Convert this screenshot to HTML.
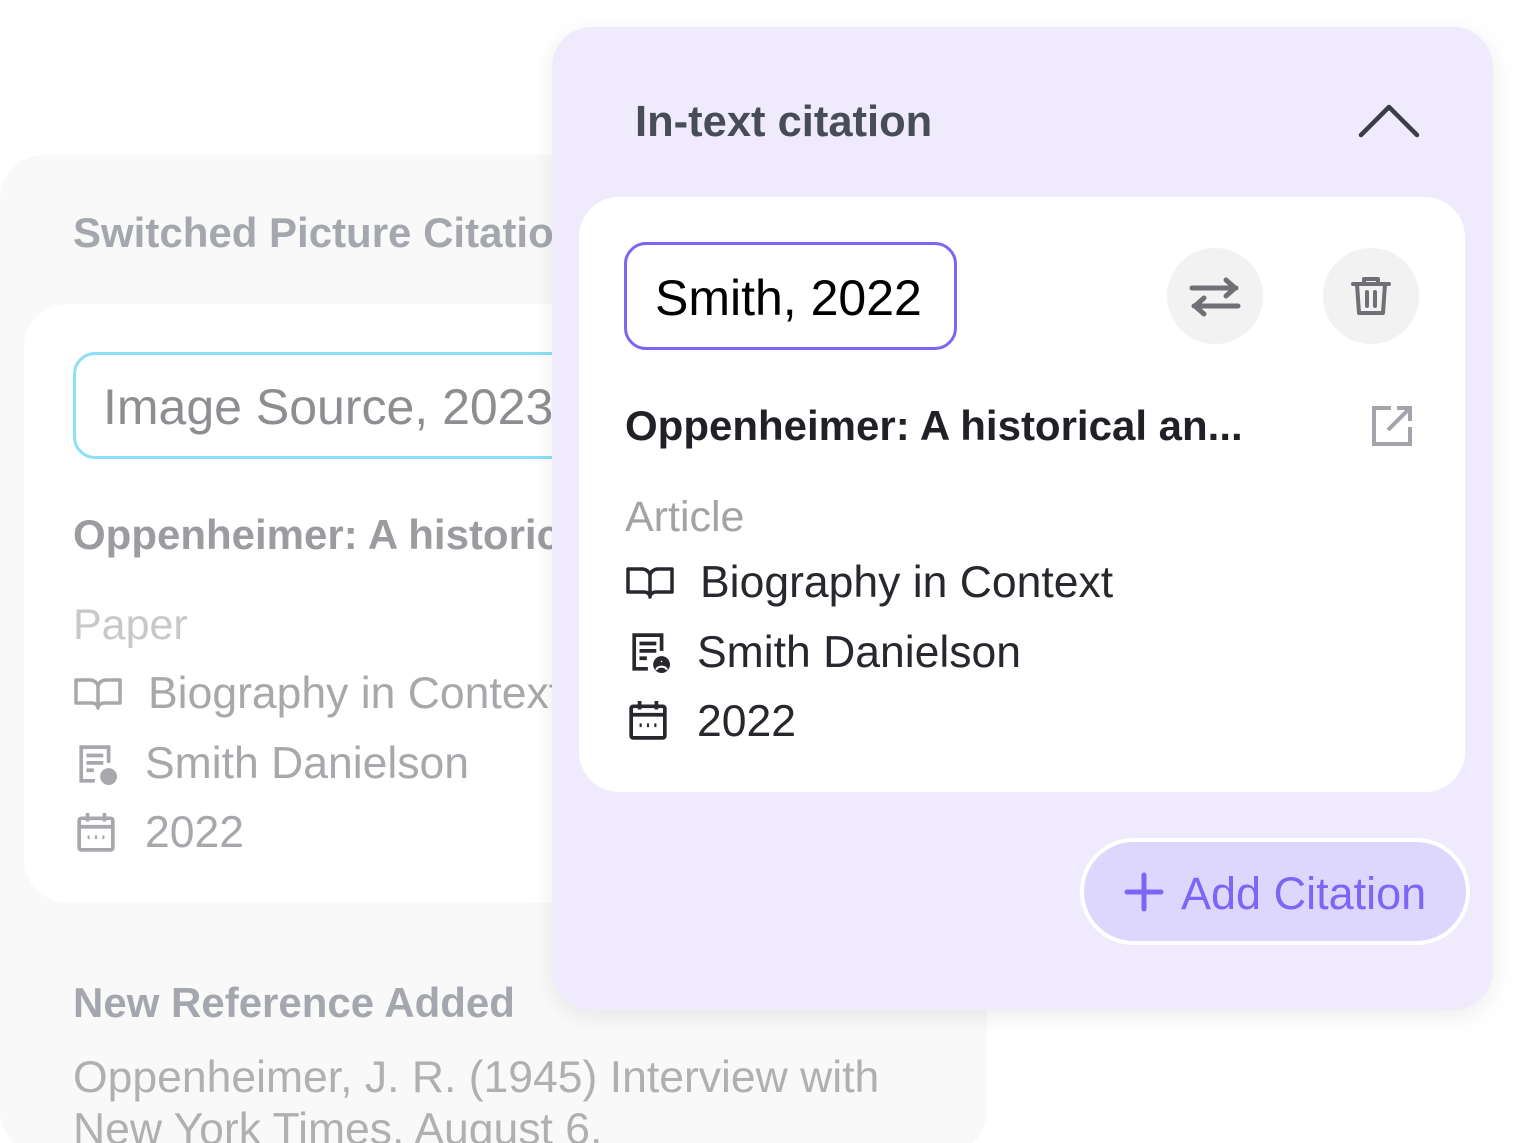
<!DOCTYPE html>
<html><head><meta charset="utf-8"><style>
*{margin:0;padding:0;box-sizing:border-box}
html,body{width:1527px;height:1143px;overflow:hidden}
body{background:#fff;font-family:"Liberation Sans",sans-serif;position:relative}
.a{position:absolute;line-height:1;white-space:nowrap}
#back{position:absolute;left:0;top:155px;width:987px;height:1000px;background:#f9f9f9;border-radius:44px;overflow:hidden}
#bin{position:absolute;left:24px;top:149px;width:1000px;height:599px;background:#fff;border-radius:44px}
#front{position:absolute;left:552px;top:27px;width:941px;height:983px;background:#efebfd;border-radius:40px;box-shadow:0 6px 24px rgba(0,0,0,.08)}
#fin{position:absolute;left:27px;top:170px;width:886px;height:595px;background:#fff;border-radius:40px}
.circ{position:absolute;width:96px;height:96px;border-radius:50%;background:#f2f2f2}
</style></head><body>
<div id="back">
  <div class="a" style="left:73px;top:57px;font-size:42px;font-weight:bold;color:#a4a7ad">Switched Picture Citation</div>
  <div id="bin">
    <div style="position:absolute;left:49px;top:48px;width:900px;height:107px;border:3px solid #8be0f8;border-radius:22px"></div>
    <div class="a" style="left:79px;top:78px;font-size:50px;color:#8e8e92">Image Source, 2023</div>
    <div class="a" style="left:49px;top:210px;font-size:42px;font-weight:bold;color:#9a9ca0">Oppenheimer: A historical an...</div>
    <div class="a" style="left:49px;top:300px;font-size:43px;color:#c8c8c8">Paper</div>
    <svg style="position:absolute;left:50px;top:372px" width="48" height="34" viewBox="0 0 48 34" fill="none" stroke="#a8a8ac" stroke-width="3.5" stroke-linejoin="round"><path d="M2 4h14c4 0 8 3 8 7v21c0-3-3-5-6-5H2z M46 4H32c-4 0-8 3-8 7v21c0-3 3-5 6-5h16z"/></svg>
    <div class="a" style="left:124px;top:368px;font-size:44.5px;color:#a8a8ac">Biography in Context</div>
    <svg style="position:absolute;left:52px;top:441px" width="42" height="40" viewBox="0 0 38 38" fill="none" stroke="#a8a8ac" stroke-width="3.5"><path d="M17 34H4V2h26v15M9 10h16M9 17h16M9 24h7"/><circle cx="30" cy="30" r="8" fill="#a8a8ac" stroke="none"/></svg>
    <div class="a" style="left:121px;top:438px;font-size:44.5px;color:#a8a8ac">Smith Danielson</div>
    <svg style="position:absolute;left:53px;top:508px" width="38" height="40" viewBox="0 0 36 38" fill="none" stroke="#a8a8ac" stroke-width="3.5"><rect x="2" y="6" width="32" height="30" rx="2"/><path d="M2 14h32M10 1v8M26 1v8"/><path d="M10 24h2M17 24h2M24 24h2"/></svg>
    <div class="a" style="left:121px;top:507px;font-size:44.5px;color:#a8a8ac">2022</div>
  </div>
  <div class="a" style="left:73px;top:827px;font-size:42px;font-weight:bold;color:#a4a7ad">New Reference Added</div>
  <div class="a" style="left:73px;top:901px;font-size:44.5px;color:#b0b0b2">Oppenheimer, J. R. (1945) Interview with</div>
  <div class="a" style="left:73px;top:953px;font-size:44.5px;color:#b0b0b2">New York Times, August 6.</div>
</div>
<div id="front">
  <div class="a" style="left:83px;top:74px;font-size:43.5px;font-weight:bold;color:#474c56">In-text citation</div>
  <svg style="position:absolute;left:806px;top:76px" width="62" height="36" viewBox="0 0 62 36" fill="none" stroke="#3a3d45" stroke-width="4.5" stroke-linecap="round" stroke-linejoin="round"><path d="M3 32L31 4l28 28"/></svg>
  <div id="fin">
    <div style="position:absolute;left:45px;top:45px;width:333px;height:108px;border:3px solid #7b66f5;border-radius:22px"></div>
    <div class="a" style="left:76px;top:76px;font-size:50px;color:#000">Smith, 2022</div>
    <div class="circ" style="left:588px;top:51px"></div>
    <svg style="position:absolute;left:609px;top:80px" width="54" height="40" viewBox="0 0 54 40" fill="none" stroke="#6e7075" stroke-width="5" stroke-linecap="round" stroke-linejoin="round"><path d="M4 11h44M38 3l9 8-9 8M50 29H6M16 21l-9 8 9 8"/></svg>
    <div class="circ" style="left:744px;top:51px"></div>
    <svg style="position:absolute;left:771px;top:77px" width="42" height="44" viewBox="0 0 42 44" fill="none" stroke="#6e7075" stroke-width="4" stroke-linecap="round" stroke-linejoin="round"><path d="M3 10h36M14 10V5h14v5M7 10l2 29h24l2-29M17 18v14M25 18v14"/></svg>
    <div class="a" style="left:46px;top:208px;font-size:42px;font-weight:bold;color:#1f2126">Oppenheimer: A historical an...</div>
    <svg style="position:absolute;left:792px;top:208px" width="42" height="42" viewBox="0 0 42 42" fill="none" stroke="#a3a5aa" stroke-width="4"><path d="M20 3H3v36h36V22M17 25L38 4M26 3h13v13"/></svg>
    <div class="a" style="left:46px;top:299px;font-size:43px;color:#a3a3a3">Article</div>
    <svg style="position:absolute;left:47px;top:368px" width="48" height="34" viewBox="0 0 48 34" fill="none" stroke="#26282d" stroke-width="3.5" stroke-linejoin="round"><path d="M2 4h14c4 0 8 3 8 7v21c0-3-3-5-6-5H2z M46 4H32c-4 0-8 3-8 7v21c0-3 3-5 6-5h16z"/></svg>
    <div class="a" style="left:121px;top:364px;font-size:44.5px;color:#26282d">Biography in Context</div>
    <svg style="position:absolute;left:50px;top:436px" width="42" height="40" viewBox="0 0 38 38" fill="none" stroke="#26282d" stroke-width="3.5"><path d="M17 34H4V2h26v15M9 10h16M9 17h16M9 24h7"/><circle cx="30" cy="30" r="8" fill="#26282d" stroke="none"/><circle cx="30" cy="27" r="2.5" fill="#fff"/><path d="M25 35c1-4 9-4 10 0" stroke="#fff" stroke-width="2"/></svg>
    <div class="a" style="left:118px;top:434px;font-size:44.5px;color:#26282d">Smith Danielson</div>
    <svg style="position:absolute;left:50px;top:503px" width="38" height="40" viewBox="0 0 36 38" fill="none" stroke="#26282d" stroke-width="3.5"><rect x="2" y="6" width="32" height="30" rx="2"/><path d="M2 14h32M10 1v8M26 1v8"/><path d="M10 24h2M17 24h2M24 24h2"/></svg>
    <div class="a" style="left:118px;top:503px;font-size:44.5px;color:#26282d">2022</div>
  </div>
  <div style="position:absolute;left:528px;top:811px;width:390px;height:107px;border:4px solid #fff;border-radius:54px;background:#ddd7fd"></div>
  <svg style="position:absolute;left:572px;top:845px" width="40" height="40" viewBox="0 0 40 40" stroke="#7b66f5" stroke-width="5" stroke-linecap="round"><path d="M20 3v34M3 20h34"/></svg>
  <div class="a" style="left:629px;top:844px;font-size:45px;color:#7b66f5">Add Citation</div>
</div>
</body></html>
